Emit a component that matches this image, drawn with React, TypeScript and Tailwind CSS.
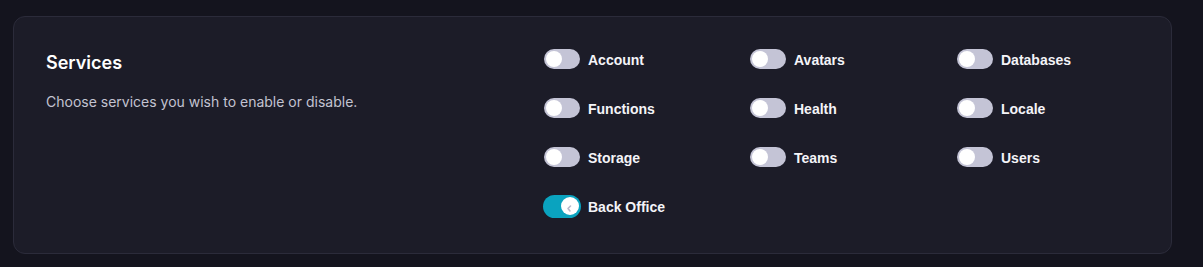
const services = [
  { name: "Account", on: false },
  { name: "Avatars", on: false },
  { name: "Databases", on: false },
  { name: "Functions", on: false },
  { name: "Health", on: false },
  { name: "Locale", on: false },
  { name: "Storage", on: false },
  { name: "Teams", on: false },
  { name: "Users", on: false },
  { name: "Back Office", on: true },
];

function Toggle({ on }: { on: boolean }) {
  if (on) {
    return (
      <div className="w-[38px] h-[23px] rounded-full bg-[#0aa3bf] flex items-center justify-end pr-[2px] shrink-0 ml-[-1px] mr-[-1px]">
        <div className="w-[18px] h-[18px] rounded-full bg-white relative">
          <svg viewBox="0 0 18 18" className="absolute inset-0 w-[18px] h-[18px]">
            <path d="M9.5 9 L7 11.5 L9 14" fill="none" stroke="#b9b9cc" strokeWidth="1.6" strokeLinecap="round" strokeLinejoin="round" />
          </svg>
        </div>
      </div>
    );
  }
  return (
    <div className="w-[36px] h-[20px] rounded-full bg-[#c4c4d6] flex items-center pl-[2px] shrink-0">
      <div className="w-[16px] h-[16px] rounded-full bg-white" />
    </div>
  );
}

export default function App() {
  return (
    <div className="min-h-[267px] bg-[#14141e] pt-[16px] pl-[13px]">
      <div className="w-[1159px] h-[238px] rounded-[12px] border border-[#2b2b3a] bg-[#1c1c28] p-8 flex">
        <div className="w-[498px] shrink-0">
          <h2 className="font-['Inter',sans-serif] font-semibold text-[18px] leading-[26px] text-white mt-[1px]">
            Services
          </h2>
          <p className="font-['Inter',sans-serif] text-[14px] leading-[20px] text-[#c3c3d1] mt-[16px]">
            Choose services you wish to enable or disable.
          </p>
        </div>
        <div className="grid grid-cols-[206px_207px_206px] gap-y-[29px] content-start">
          {services.map((s) => (
            <div key={s.name} className="flex items-center gap-2 h-[20px]">
              <Toggle on={s.on} />
              <span className="font-['Liberation_Sans',Arial,sans-serif] font-bold text-[14px] text-[#f4f4f8] pt-[2px]">
                {s.name}
              </span>
            </div>
          ))}
        </div>
      </div>
    </div>
  );
}
